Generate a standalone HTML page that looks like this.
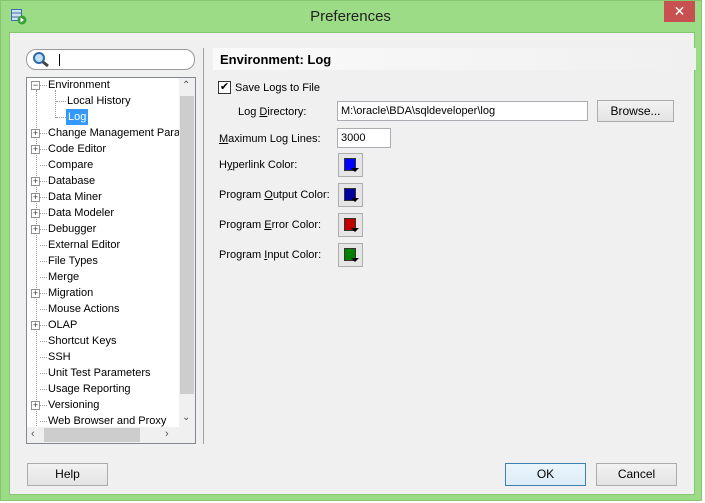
<!DOCTYPE html>
<html><head><style>
*{margin:0;padding:0;box-sizing:border-box}
body{width:705px;height:503px;background:#fff;font-family:"Liberation Sans",sans-serif;font-size:11px;color:#000;position:relative;overflow:hidden}
.a{position:absolute}
.win{left:0;top:0;width:702px;height:501px;background:#9ddc86;border:1px solid #86c671}
.client{left:9px;top:32px;width:686px;height:463px;background:#f0f0f0;border:1px solid #86c671}
.title{left:0;top:8px;width:701px;text-align:center;font-size:15px;color:#222}
.close{left:664px;top:1px;width:31px;height:21px;background:#c75050;color:#fff;text-align:center;font-size:14px;line-height:20px}
.btn{background:linear-gradient(#f2f2f2,#e3e3e3);border:1px solid #acacac;text-align:center;font-size:12px;line-height:20px}
.inp{background:#fff;border:1px solid #abadb3;font-size:11px;padding-left:3px;line-height:18px}
.row{position:absolute;height:16px;line-height:16px;font-size:11px;white-space:nowrap}
.pm{position:absolute;width:9px;height:9px;border:1px solid #919191;background:#fff;font-size:9px;line-height:7px;text-align:center;color:#333}
.dot{position:absolute;border-top:1px dotted #999;width:8px;height:0}
.lbl{position:absolute;font-size:11px}
.cb{position:absolute;left:338px;width:25px;height:24px;border:1px solid #adadad;background:#e6e6e6}
.cb i{position:absolute;left:5px;top:4px;width:12px;height:13px;border:1px solid #333}
.cb b{position:absolute;left:12px;top:14px;width:0;height:0;border-left:4px solid transparent;border-right:4px solid transparent;border-top:4px solid #000}
u{text-decoration:underline}
</style></head><body>
<div class="a win"></div>
<div class="a client"></div>
<svg class="a" style="left:11px;top:9px" width="16" height="16"><rect x="0.5" y="0.5" width="10" height="11" fill="#cfe0f0" stroke="#3a6fb0"/><line x1="0" y1="4" x2="11" y2="4" stroke="#3a6fb0"/><line x1="0" y1="8" x2="11" y2="8" stroke="#3a6fb0"/><circle cx="11" cy="11" r="4.5" fill="#3aa03a"/><path d="M9.5 8.5 L13 11 L9.5 13.5Z" fill="#fff"/></svg>
<div class="a title">Preferences</div>
<div class="a close">✕</div>

<div class="a" style="left:26px;top:49px;width:169px;height:21px;border:1px solid #9a9a9a;border-radius:10px;background:#fff"></div>
<svg class="a" style="left:32px;top:51px" width="18" height="17"><circle cx="7" cy="7" r="5" fill="#bfe0f7" stroke="#2d6aa8" stroke-width="2"/><line x1="11" y1="11" x2="16" y2="15" stroke="#444" stroke-width="3"/></svg>
<div class="a" style="left:59px;top:54px;width:1px;height:12px;background:#000"></div>

<div class="a" style="left:26px;top:77px;width:170px;height:367px;border:1px solid #828790;background:#fff;overflow:hidden">
<div class="a" style="left:9px;top:12px;height:336px;border-left:1px dotted #999"></div>
<div class="a" style="left:28px;top:12px;height:28px;border-left:1px dotted #999"></div>
<div id="tree" class="a" style="left:-27px;top:-78px;width:179px;height:430px"></div>
<div class="a" style="left:152px;top:0;width:16px;height:349px;background:#f0f0f0"></div>
<div class="a" style="left:153px;top:18px;width:14px;height:298px;background:#cdcdcd"></div>
<div class="a" style="left:155px;top:2px;font-size:10px;color:#555">&#8963;</div>
<div class="a" style="left:155px;top:334px;font-size:10px;color:#555">&#8964;</div>
<div class="a" style="left:0;top:349px;width:152px;height:16px;background:#f0f0f0"></div>
<div class="a" style="left:17px;top:350px;width:96px;height:14px;background:#cdcdcd"></div>
<div class="a" style="left:4px;top:350px;font-size:11px;color:#555">&lsaquo;</div>
<div class="a" style="left:138px;top:350px;font-size:11px;color:#555">&rsaquo;</div>
<div class="a" style="left:152px;top:349px;width:16px;height:16px;background:#f0f0f0"></div>
</div>

<div class="a" style="left:203px;top:48px;width:1px;height:396px;background:#a0a0a0"></div>
<div class="a" style="left:213px;top:48px;width:483px;height:22px;background:linear-gradient(90deg,#fafafa,#f0f0f0)"></div>
<div class="a" style="left:220px;top:52px;font-size:13px;font-weight:bold">Environment: Log</div>

<div class="a" style="left:218px;top:81px;width:13px;height:13px;border:1px solid #333;background:#fff;font-size:11px;line-height:11px;text-align:center">✔</div>
<div class="lbl" style="left:235px;top:82px">Save Logs to File</div>
<div class="lbl" style="left:238px;top:106px">Log <u>D</u>irectory:</div>
<div class="a inp" style="left:337px;top:101px;width:251px;height:20px">M:\oracle\BDA\sqldeveloper\log</div>
<div class="a btn" style="left:597px;top:100px;width:77px;height:22px">Browse...</div>
<div class="lbl" style="left:219px;top:133px"><u>M</u>aximum Log Lines:</div>
<div class="a inp" style="left:337px;top:128px;width:54px;height:20px">3000</div>
<div class="lbl" style="left:219px;top:159px">H<u>y</u>perlink Color:</div>
<div class="lbl" style="left:219px;top:189px">Program <u>O</u>utput Color:</div>
<div class="lbl" style="left:219px;top:219px">Program <u>E</u>rror Color:</div>
<div class="lbl" style="left:219px;top:249px">Program <u>I</u>nput Color:</div>
<div class="cb" style="top:153px"><i style="background:#0000ff"></i><b></b></div>
<div class="cb" style="top:183px"><i style="background:#0000a0"></i><b></b></div>
<div class="cb" style="top:213px"><i style="background:#c00000"></i><b></b></div>
<div class="cb" style="top:243px"><i style="background:#008000"></i><b></b></div>

<div class="a btn" style="left:27px;top:463px;width:81px;height:23px">Help</div>
<div class="a btn" style="left:505px;top:463px;width:81px;height:23px;border-color:#3c7fb1;background:linear-gradient(#eaf4fb,#dcecf7)">OK</div>
<div class="a btn" style="left:596px;top:463px;width:81px;height:23px">Cancel</div>

<script>
var items=[["Environment",0,"-"],["Local History",1],["Log",1,null,1],["Change Management Parar",0,"+"],["Code Editor",0,"+"],["Compare",0],["Database",0,"+"],["Data Miner",0,"+"],["Data Modeler",0,"+"],["Debugger",0,"+"],["External Editor",0],["File Types",0],["Merge",0],["Migration",0,"+"],["Mouse Actions",0],["OLAP",0,"+"],["Shortcut Keys",0],["SSH",0],["Unit Test Parameters",0],["Usage Reporting",0],["Versioning",0,"+"],["Web Browser and Proxy",0]];
var h="";
items.forEach(function(it,i){var y=77+i*16;var x=it[1]?67:48;
 h+='<div class="dot" style="left:'+(it[1]?56:40)+'px;top:'+(y+8)+'px;width:'+(it[1]?10:7)+'px"></div>';
 if(it[2])h+='<div class="pm" style="left:31px;top:'+(y+4)+'px">'+(it[2]=="+"?"+":"−")+'</div>';
 h+='<div class="row" style="left:'+(x-1)+'px;top:'+y+'px;'+(it[3]?'background:#3399ff;color:#fff;padding:0 2px;':'padding:0 1px;')+'">'+it[0]+'</div>';});
document.getElementById("tree").innerHTML=h;
</script>
</body></html>
